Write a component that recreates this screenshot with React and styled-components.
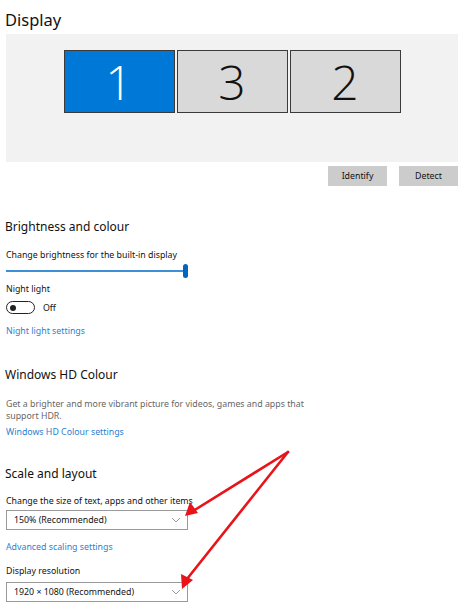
import React from "react";
import styled, { createGlobalStyle } from "styled-components";

const Global = createGlobalStyle`
  html, body { margin: 0; padding: 0; background: #fff; }
  body { font-family: "Noto Sans", "Open Sans", sans-serif; color: #000; }
`;

const Page = styled.div`
  position: relative;
  width: 474px;
  height: 611px;
  overflow: hidden;
  padding: 0 16px 0 6px;
  box-sizing: border-box;
`;

const Title = styled.h1`
  margin: 0 0 0 -1px;
  padding-top: 9px;
  font-size: 16.5px;
  line-height: 22px;
  font-weight: 400;
  color: #111;
`;

const Stage = styled.div`
  margin-top: 3px;
  height: 128px;
  background: #f2f2f2;
  display: flex;
  justify-content: center;
  align-items: flex-start;
  gap: 2px;
  padding-top: 16px;
  box-sizing: border-box;
`;

const Monitor = styled.div`
  width: 111px;
  height: 63px;
  box-sizing: border-box;
  border: 1px solid #3a3a3a;
  background: ${(p) => (p.$active ? "#0078d7" : "#d9d9d9")};
  color: ${(p) => (p.$active ? "#fff" : "#111")};
  display: flex;
  align-items: center;
  justify-content: center;
  font-family: "Open Sans", "Noto Sans", sans-serif;
  font-weight: 300;
  font-size: 48px;
  line-height: 1;
`;

const ButtonRow = styled.div`
  display: flex;
  justify-content: flex-end;
  gap: 12px;
  margin-top: 4px;
`;

const Button = styled.div`
  width: 59px;
  height: 20px;
  background: #cccccc;
  display: flex;
  align-items: center;
  justify-content: center;
  font-size: 8.8px;
  color: #111;
`;

const Heading = styled.h2`
  margin: ${(p) => p.$top}px 0 0 -1px;
  font-size: 12px;
  line-height: 16px;
  font-weight: 400;
  color: #111;
`;

const Label = styled.div`
  margin-top: ${(p) => p.$top}px;
  font-size: 8.8px;
  line-height: 12px;
  color: #111;
`;

const Desc = styled.div`
  margin-top: ${(p) => p.$top}px;
  width: 305px;
  font-size: 8.8px;
  line-height: 11.5px;
  color: #666;
`;

const Link = styled.div`
  margin-top: ${(p) => p.$top}px;
  font-size: 8.8px;
  line-height: 12px;
  color: #2b7fd1;
`;

const SliderTrack = styled.div`
  margin-top: 3px;
  width: 182px;
  height: 14px;
  display: flex;
  align-items: center;
`;

const SliderFill = styled.div`
  flex: 1;
  height: 2px;
  background: #3f8fd6;
`;

const SliderThumb = styled.div`
  width: 5px;
  height: 14px;
  border-radius: 3px;
  background: #0067c0;
`;

const ToggleRow = styled.div`
  margin-top: 6px;
  display: flex;
  align-items: center;
  gap: 8px;
`;

const Toggle = styled.div`
  width: 29px;
  height: 13px;
  box-sizing: border-box;
  border: 1.5px solid #222;
  border-radius: 7px;
  display: flex;
  align-items: center;
  padding-left: 3px;
`;

const Knob = styled.div`
  width: 6px;
  height: 6px;
  border-radius: 50%;
  background: #222;
`;

const ToggleText = styled.span`
  font-size: 8.8px;
  line-height: 12px;
  color: #111;
`;

const Select = styled.div`
  margin-top: ${(p) => p.$top}px;
  width: 182px;
  height: 20px;
  box-sizing: border-box;
  border: 1.5px solid #9a9a9a;
  display: flex;
  align-items: center;
  justify-content: space-between;
  padding: 0 6px 0 7px;
  font-size: 8.8px;
  color: #111;
`;

const Chevron = () => (
  <svg width="10" height="6" viewBox="0 0 10 6">
    <path d="M1 1 L5 5 L9 1" fill="none" stroke="#999" strokeWidth="1" />
  </svg>
);

const Overlay = styled.svg`
  position: absolute;
  left: 0;
  top: 0;
  pointer-events: none;
`;

const Arrows = () => (
  <Overlay width="474" height="611" viewBox="0 0 474 611">
    <g stroke="#e8141a" strokeWidth="2.6" strokeLinecap="round" fill="none">
      <line x1="288" y1="452" x2="193" y2="511" />
      <line x1="288" y1="452" x2="187" y2="579" />
    </g>
    <g fill="#e8141a">
      <polygon points="185,516 190,502 198,513" />
      <polygon points="182,589 181,574 193,580" />
    </g>
  </Overlay>
);

export default function App() {
  return (
    <>
      <Global />
      <Page>
        <Title>Display</Title>
        <Stage>
          <Monitor $active>1</Monitor>
          <Monitor>3</Monitor>
          <Monitor>2</Monitor>
        </Stage>
        <ButtonRow>
          <Button>Identify</Button>
          <Button>Detect</Button>
        </ButtonRow>

        <Heading $top={33}>Brightness and colour</Heading>
        <Label $top={14}>Change brightness for the built-in display</Label>
        <SliderTrack>
          <SliderFill />
          <SliderThumb />
        </SliderTrack>
        <Label $top={5}>Night light</Label>
        <ToggleRow>
          <Toggle>
            <Knob />
          </Toggle>
          <ToggleText>Off</ToggleText>
        </ToggleRow>
        <Link $top={11}>Night light settings</Link>

        <Heading $top={30}>Windows HD Colour</Heading>
        <Desc $top={16}>
          Get a brighter and more vibrant picture for videos, games and apps that support HDR.
        </Desc>
        <Link $top={4}>Windows HD Colour settings</Link>

        <Heading $top={28}>Scale and layout</Heading>
        <Label $top={13}>Change the size of text, apps and other items</Label>
        <Select $top={3}>
          <span>150% (Recommended)</span>
          <Chevron />
        </Select>
        <Link $top={11}>Advanced scaling settings</Link>
        <Label $top={12}>Display resolution</Label>
        <Select $top={5}>
          <span>1920 × 1080 (Recommended)</span>
          <Chevron />
        </Select>
        <Arrows />
      </Page>
    </>
  );
}
